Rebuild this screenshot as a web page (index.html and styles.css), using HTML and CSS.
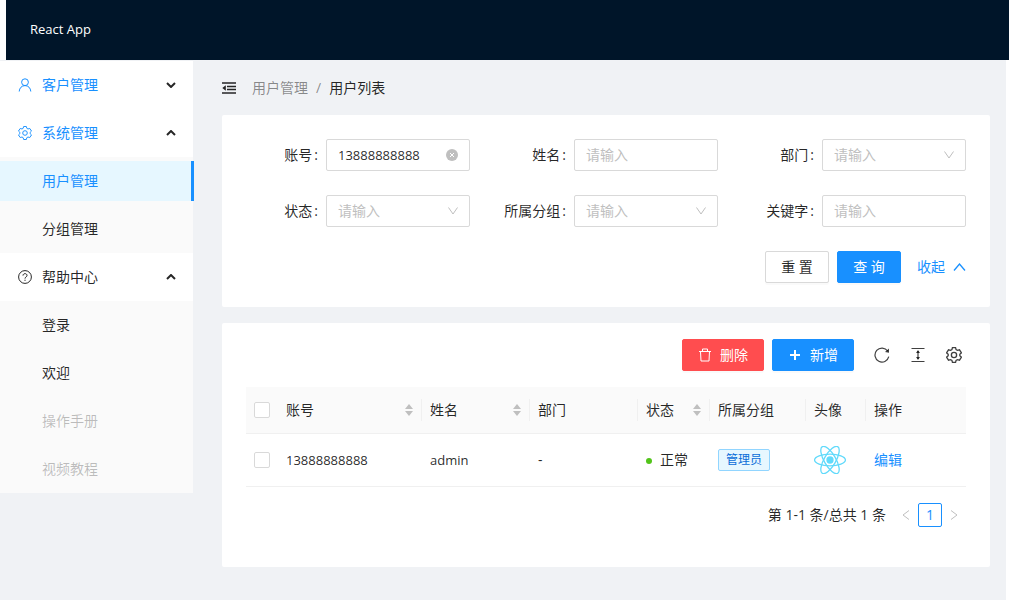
FILE: index.html
```html
<!DOCTYPE html>
<html lang="zh-CN">
  <head>
    <meta charset="UTF-8" />
    <meta name="viewport" content="width=device-width, initial-scale=1" />
    <title>React App</title>
    <link rel="stylesheet" href="styles.css">
  </head>
  <body>
    <!-- shared shapes -->
    <svg class="sprite" aria-hidden="true">
      <symbol id="gear" viewBox="0.7 0.7 14.6 14.6">
        <path d="M6.600 1.200h2.800l.5 1.900 1.200.7 1.900-.5 1.800 2.700-1.500 1.400v1.200l1.500 1.400-1.800 2.700-1.900-.5-1.200.7-.5 1.900H6.600l-.5-1.900-1.200-.7-1.900.5-1.800-2.700 1.500-1.400V7.400L1.200 6 3 3.300l1.900.5 1.200-.7z" />
        <circle cx="8" cy="8" r="2.400" />
      </symbol>
      <symbol id="down" viewBox="0 0 12 12">
        <path d="M1.500 2.500 6 9l4.500-6.500" />
      </symbol>
      <symbol id="sort" viewBox="0 0 8 12">
        <path d="M4 0l4 5H0zM4 12l4-5H0z" />
      </symbol>
    </svg>

    <header class="header">React App</header>

    <div class="layout">
      <nav class="sider">
        <a class="menu-title active" href="#">
          <svg class="icon" viewBox="0 0 14 14"><circle cx="7" cy="4.200" r="3.400" /><path d="M1.200 13.500C1.400 10 3.700 7.600 7 7.600s5.600 2.400 5.800 5.900" /></svg>
          <span>客户管理</span>
          <svg class="arrow" viewBox="0 0 10 6"><path d="M1 1l4 4 4-4" /></svg>
        </a>
        <a class="menu-title active" href="#">
          <svg class="icon"><use href="#gear" /></svg>
          <span>系统管理</span>
          <svg class="arrow" viewBox="0 0 10 6"><path d="M1 5l4-4 4 4" /></svg>
        </a>
        <div class="submenu">
          <a class="menu-item selected" href="#">用户管理</a>
          <a class="menu-item" href="#">分组管理</a>
        </div>
        <a class="menu-title" href="#">
          <svg class="icon" viewBox="0 0 14 14"><circle cx="7" cy="7" r="6.400" /><path d="M5 5.600C5 3 9 3 9 5.500 9 7 7 6.900 7 8.600M7 9.700v1.200" /></svg>
          <span>帮助中心</span>
          <svg class="arrow" viewBox="0 0 10 6"><path d="M1 5l4-4 4 4" /></svg>
        </a>
        <div class="submenu">
          <a class="menu-item" href="#">登录</a>
          <a class="menu-item" href="#">欢迎</a>
          <a class="menu-item disabled" aria-disabled="true">操作手册</a>
          <a class="menu-item disabled" aria-disabled="true">视频教程</a>
        </div>
      </nav>

      <main class="content">
        <div class="topbar">
          <button class="icon-btn" type="button" aria-label="收起菜单">
            <svg class="fold" viewBox="0 0 14 12"><path d="M0 1h14M5 4.500h9M5 7.500h9M0 11h14" /><path class="solid" d="M3.800 3.200v5.600L.3 6z" /></svg>
          </button>
          <a class="crumb" href="#">用户管理</a>
          <span class="slash">/</span>
          <span>用户列表</span>
        </div>

        <form class="card search">
          <div class="field">
            <label for="account">账号</label>
            <div class="control">
              <input class="num" type="text" id="account" value="13888888888">
              <svg class="clear" viewBox="0 0 12 12"><circle cx="6" cy="6" r="6" /><path d="M4 4l4 4M8 4l-4 4" /></svg>
            </div>
          </div>
          <div class="field">
            <label for="name">姓名</label>
            <div class="control"><input type="text" id="name" placeholder="请输入"></div>
          </div>
          <div class="field">
            <label for="dept">部门</label>
            <div class="control">
              <select id="dept"><option>请输入</option></select>
              <svg class="caret"><use href="#down" /></svg>
            </div>
          </div>
          <div class="field">
            <label for="status">状态</label>
            <div class="control">
              <select id="status"><option>请输入</option></select>
              <svg class="caret"><use href="#down" /></svg>
            </div>
          </div>
          <div class="field">
            <label for="group">所属分组</label>
            <div class="control">
              <select id="group"><option>请输入</option></select>
              <svg class="caret"><use href="#down" /></svg>
            </div>
          </div>
          <div class="field">
            <label for="keyword">关键字</label>
            <div class="control"><input type="text" id="keyword" placeholder="请输入"></div>
          </div>
          <div class="search-actions">
            <button class="btn" type="reset">重 置</button>
            <button class="btn primary" type="button">查 询</button>
            <a class="collapse" href="#">收起 <svg viewBox="0 0 13 8"><path d="M1 7.500 6.500 1 12 7.500" /></svg></a>
          </div>
        </form>

        <section class="card list">
          <div class="toolbar">
            <button class="btn danger" type="button">
              <svg class="icon" viewBox="0 0 14 14"><path d="M1 3.500h12M4.500 3.500v-2.500h5v2.500M2.500 3.500l.5 9.500h8l.5-9.500" /></svg>
              <span>删除</span>
            </button>
            <button class="btn primary" type="button">
              <svg class="icon plus" viewBox="0 0 14 14"><path d="M7 2v10M2 7h10" /></svg>
              <span>新增</span>
            </button>
            <div class="tools">
              <button class="icon-btn" type="button" aria-label="刷新">
                <svg viewBox="0 0 16 16"><path d="M13.700 4A7 7 0 1 0 14.800 9.700" /><path class="solid" d="M15 1.500v4.200l-4-.7z" /></svg>
              </button>
              <button class="icon-btn" type="button" aria-label="密度">
                <svg viewBox="0 0 16 16"><path d="M1.500 1.500h13M1.500 14.500h13M8 4v8" /><path class="solid" d="M8 3 10 6H6zM8 13l2-3H6z" /></svg>
              </button>
              <button class="icon-btn" type="button" aria-label="列设置">
                <svg><use href="#gear" /></svg>
              </button>
            </div>
          </div>

          <table class="table">
            <colgroup>
              <col class="col-check"><col class="col-account"><col class="col-name"><col class="col-name">
              <col class="col-status"><col class="col-group"><col class="col-avatar"><col>
            </colgroup>
            <thead>
              <tr>
                <th class="check"><input type="checkbox" aria-label="全选"></th>
                <th><div class="th">账号<svg class="sorter"><use href="#sort" /></svg></div></th>
                <th><div class="th">姓名<svg class="sorter"><use href="#sort" /></svg></div></th>
                <th><div class="th">部门</div></th>
                <th><div class="th">状态<svg class="sorter"><use href="#sort" /></svg></div></th>
                <th><div class="th">所属分组</div></th>
                <th><div class="th">头像</div></th>
                <th><div class="th last">操作</div></th>
              </tr>
            </thead>
            <tbody>
              <tr>
                <td class="check"><input type="checkbox" aria-label="选择 admin"></td>
                <td class="num">13888888888</td>
                <td class="num">admin</td>
                <td>-</td>
                <td><span class="dot"></span>正常</td>
                <td><span class="tag">管理员</span></td>
                <td class="avatar">
                  <svg viewBox="0 0 32 28">
                    <circle cx="16" cy="14" r="3" />
                    <ellipse cx="16" cy="14" rx="15.400" ry="5.800" />
                    <ellipse cx="16" cy="14" rx="15.400" ry="5.800" transform="rotate(60 16 14)" />
                    <ellipse cx="16" cy="14" rx="15.400" ry="5.800" transform="rotate(120 16 14)" />
                  </svg>
                </td>
                <td><a class="link" href="#">编辑</a></td>
              </tr>
            </tbody>
          </table>

          <div class="pagination">
            <span class="total">第 1-1 条/总共 1 条</span>
            <button class="page-nav" type="button" aria-label="上一页" disabled><svg viewBox="0 0 8 12"><path d="M7 1.500 1 6l6 4.500" /></svg></button>
            <button class="page" type="button">1</button>
            <button class="page-nav" type="button" aria-label="下一页" disabled><svg viewBox="0 0 8 12"><path d="M1 1.500 7 6l-6 4.500" /></svg></button>
          </div>
        </section>
      </main>
    </div>
  </body>
</html>
```

FILE: styles.css
```css
* {
  box-sizing: border-box;
}

body {
  margin: 0;
  background-color: #fff;
  color: rgba(0, 0, 0, 0.85);
  font-family: "Open Sans", "Noto Sans CJK SC", sans-serif;
  font-size: 14px;
  line-height: 22px;
}

a {
  color: inherit;
  text-decoration: none;
}

button,
input,
select {
  font: inherit;
  color: inherit;
}

button {
  cursor: pointer;
}

svg {
  fill: none;
  stroke: currentColor;
}

.sprite {
  position: absolute;
  width: 0;
  height: 0;
}

.solid {
  fill: currentColor;
  stroke: none;
}

.num {
  font-size: 13px;
}

/* Header */
.header {
  height: 60px;
  margin-left: 6px;
  padding-left: 24px;
  background-color: #001529;
  color: #fff;
  font-size: 13px;
  line-height: 59px;
}

/* Layout */
.layout {
  display: flex;
  align-items: flex-start;
  min-height: calc(100vh - 60px);
  margin-right: 3px;
  background-color: #f0f2f5;
}

.sider {
  flex: 0 0 193px;
  margin-top: 1px;
  background-color: #fff;
}

.menu-title {
  display: flex;
  align-items: center;
  height: 48px;
  padding: 0 17px 0 18px;
}

.menu-title .icon {
  margin-right: 10px;
}

.icon {
  width: 14px;
  height: 14px;
}

.menu-title.active span,
.menu-title.active .icon {
  color: #1890ff;
}

.arrow {
  width: 10px;
  height: 6px;
  margin-left: auto;
  stroke-width: 2;
}

.submenu {
  display: flex;
  flex-direction: column;
  gap: 8px;
  padding: 4px 0;
  background-color: #fafafa;
}

.menu-item {
  height: 40px;
  padding-left: 42px;
  line-height: 40px;
}

.menu-item.selected {
  margin-right: -1px;
  background-color: #e6f7ff;
  border-right: 3px solid #1890ff;
  color: #1890ff;
}

.menu-item.disabled {
  color: rgba(0, 0, 0, 0.25);
}

.content {
  flex: 1;
  min-width: 0;
  padding: 0 16px 32px 29px;
}

.topbar {
  display: flex;
  align-items: center;
  height: 55px;
}

.icon-btn {
  display: flex;
  padding: 0;
  border: none;
  background: none;
}

.fold {
  width: 14px;
  height: 12px;
  margin-right: 16px;
  stroke-width: 1.4;
}

.crumb,
.slash {
  color: rgba(0, 0, 0, 0.45);
}

.slash {
  margin: 0 8px;
}

.card {
  padding: 24px;
  border-radius: 2px;
  background-color: #fff;
}

/* Search form */
.search {
  display: grid;
  grid-template-columns: repeat(3, 1fr);
  gap: 24px;
  margin-bottom: 16px;
}

.field {
  display: grid;
  grid-template-columns: 80px 1fr;
  align-items: center;
}

.field label {
  padding-right: 8px;
  text-align: right;
  white-space: nowrap;
}

.field label::after {
  content: ":";
  margin-left: 2px;
}

.control {
  position: relative;
}

.control input,
.control select {
  display: block;
  width: 100%;
  height: 32px;
  padding: 0 11px;
  border: 1px solid #d9d9d9;
  border-radius: 2px;
  background-color: #fff;
  appearance: none;
}

.control input:placeholder-shown {
  padding-bottom: 2px;
}

.control select,
.control input::placeholder {
  color: #bfbfbf;
}

.clear,
.caret {
  position: absolute;
  top: 10px;
  right: 11px;
  width: 12px;
  height: 12px;
  color: #bfbfbf;
  pointer-events: none;
}

.clear {
  right: 12px;
}

.clear circle {
  fill: #bfbfbf;
  stroke: none;
}

.clear path {
  stroke: #fff;
}

.search-actions {
  display: flex;
  grid-column: 1 / -1;
  justify-content: flex-end;
  align-items: center;
  gap: 8px;
}

.btn {
  display: flex;
  align-items: center;
  justify-content: center;
  gap: 8px;
  min-width: 64px;
  height: 32px;
  padding: 0 15px;
  border: 1px solid #d9d9d9;
  border-radius: 2px;
  background-color: #fff;
  box-shadow: 0 2px 0 rgba(0, 0, 0, 0.02);
}

.btn.primary {
  border-color: #1890ff;
  background-color: #1890ff;
  color: #fff;
}

.btn.danger {
  border-color: #ff4d4f;
  background-color: #ff4d4f;
  color: #fff;
}

.plus {
  stroke-width: 2;
}

.collapse {
  display: flex;
  align-items: center;
  gap: 8px;
  margin-left: 8px;
  color: #1890ff;
}

.collapse svg {
  width: 13px;
  height: 8px;
  stroke-width: 1.3;
}

/* List */
.list {
  padding-top: 16px;
  padding-bottom: 40px;
}

.toolbar {
  display: flex;
  justify-content: flex-end;
  gap: 8px;
  margin-bottom: 16px;
}

.tools {
  display: flex;
  align-items: center;
  gap: 20px;
  margin: 0 4px 0 12px;
  color: rgba(0, 0, 0, 0.75);
}

.tools svg {
  width: 16px;
  height: 16px;
  stroke-width: 1.2;
}

.table {
  width: 100%;
  border-collapse: collapse;
  table-layout: fixed;
}

.col-check {
  width: 32px;
}

.col-account {
  width: 144px;
}

.col-name {
  width: 108px;
}

.col-status {
  width: 72px;
}

.col-group {
  width: 96px;
}

.col-avatar {
  width: 60px;
}

.table th,
.table td {
  padding: 0 8px;
  border-bottom: 1px solid #f0f0f0;
  font-weight: normal;
  text-align: left;
}

.table th {
  height: 46px;
  padding-right: 0;
  background-color: #fafafa;
}

.table td {
  height: 53px;
}

.th {
  display: flex;
  align-items: center;
  justify-content: space-between;
  padding-right: 8px;
  border-right: 1px solid #f0f0f0;
}

.th.last {
  border-right: none;
}

.sorter {
  width: 8px;
  height: 12px;
  fill: #bfbfbf;
  stroke: none;
}

.check input {
  display: block;
  width: 16px;
  height: 16px;
  margin: 0;
  border: 1px solid #d9d9d9;
  border-radius: 2px;
  background-color: #fff;
  appearance: none;
}

.dot {
  display: inline-block;
  width: 6px;
  height: 6px;
  margin-right: 8px;
  border-radius: 50%;
  background-color: #52c41a;
  vertical-align: middle;
}

.tag {
  display: inline-block;
  padding: 0 7px;
  border: 1px solid #91d5ff;
  border-radius: 2px;
  background-color: #e6f7ff;
  color: #096dd9;
  font-size: 12px;
  line-height: 20px;
}

.avatar svg {
  display: block;
  width: 32px;
  height: 28px;
  color: #61dafb;
  stroke-width: 1.3;
}

.avatar circle {
  fill: #61dafb;
}

.link {
  color: #1890ff;
}

.pagination {
  display: flex;
  justify-content: flex-end;
  align-items: center;
  margin-top: 16px;
}

.total {
  margin-right: 8px;
}

.page,
.page-nav {
  display: flex;
  align-items: center;
  justify-content: center;
  width: 24px;
  height: 24px;
  padding: 0;
  border: none;
  background: none;
}

.page {
  border: 1px solid #1890ff;
  border-radius: 2px;
  color: #1890ff;
}

.page-nav {
  color: #bfbfbf;
}

.page-nav svg {
  width: 8px;
  height: 12px;
}
```
